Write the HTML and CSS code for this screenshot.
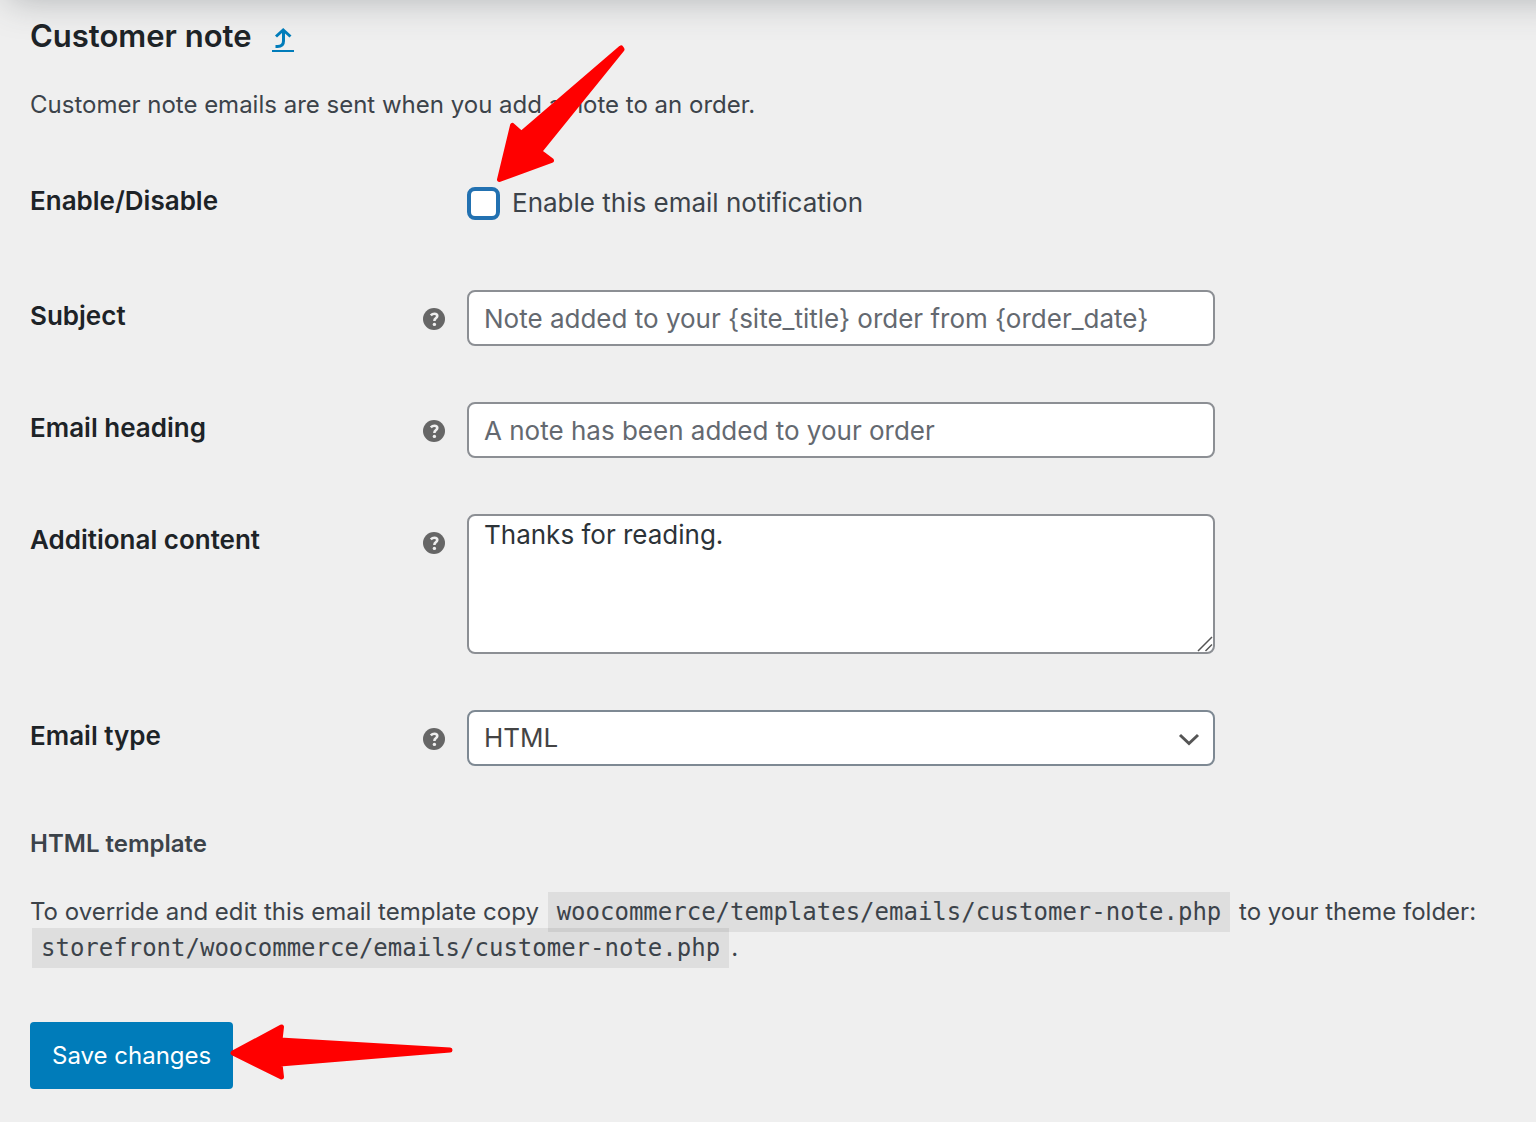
FILE: index.html
```html
<!DOCTYPE html>
<html lang="en">
<head>
    <meta charset="UTF-8">
    <meta name="viewport" content="width=device-width, initial-scale=1.0">
    <link rel="stylesheet" href="styles.css">
    <title>Customer note</title>
</head>
<body>
    <div class="top-bar"></div>
    <main class="settings">
        <h2 class="title">
            Customer note
            <a href="#" class="back-link" aria-label="Return to emails">
                <svg width="22" height="25" viewBox="0 0 22 25" fill="none" stroke="currentColor">
                    <path d="M3.500 19.500H5.500Q11.500 19.500 11.500 14V3.500" stroke-width="3"/>
                    <path d="M4 9.500L11.200 3L18.500 9.500" stroke-width="3"/>
                    <path d="M0 24H22" stroke-width="2"/>
                </svg>
            </a>
        </h2>
        <p class="description">Customer note emails are sent when you add a note to an order.</p>

        <form id="email-form">
            <div class="form-row enable-row">
                <label class="row-label" for="enabled">Enable/Disable</label>
                <div class="check-wrap">
                    <label class="check-label"><input type="checkbox" class="checkbox" id="enabled">Enable this email notification</label>
                    <svg class="arrow arrow-down" width="128" height="138" viewBox="0 0 128 138">
                        <path class="arrow-fill" d="M124 3L24.500 88.500L15.500 80.500L2.500 134.500L54.500 115.500L42.500 106.500L125 4.500Z"/>
                    </svg>
                </div>
            </div>
            <div class="form-row">
                <label class="row-label" for="subject">Subject</label>
                <svg class="help" viewBox="0 0 22 22"><use href="#help-icon"/></svg>
                <input type="text" class="field" id="subject" placeholder="Note added to your {site_title} order from {order_date}">
            </div>
            <div class="form-row">
                <label class="row-label" for="heading">Email heading</label>
                <svg class="help" viewBox="0 0 22 22"><use href="#help-icon"/></svg>
                <input type="text" class="field" id="heading" placeholder="A note has been added to your order">
            </div>
            <div class="form-row">
                <label class="row-label" for="content">Additional content</label>
                <svg class="help" viewBox="0 0 22 22"><use href="#help-icon"/></svg>
                <div class="textarea-wrap">
                    <textarea class="field" id="content">Thanks for reading.</textarea>
                    <svg class="grip" width="16" height="16" viewBox="0 0 16 16">
                        <path d="M1 15L15 1M8.500 15L15 8.500"/>
                    </svg>
                </div>
            </div>
            <div class="form-row">
                <label class="row-label" for="type">Email type</label>
                <svg class="help" viewBox="0 0 22 22"><use href="#help-icon"/></svg>
                <div class="select-wrap">
                    <select class="field" id="type">
                        <option>HTML</option>
                        <option>Plain text</option>
                        <option>Multipart</option>
                    </select>
                    <svg class="chevron" width="22" height="14" viewBox="0 0 22 14">
                        <path d="M2 2L11 10.500L20 2"/>
                    </svg>
                </div>
            </div>
        </form>

        <h4 class="subtitle">HTML template</h4>
        <p class="template-text">To override and edit this email template copy <code>woocommerce/templates/emails/customer-note.php</code> to your theme folder: <code>storefront/woocommerce/emails/customer-note.php</code>.</p>

        <div class="submit">
            <button type="submit" class="save-button" form="email-form">Save changes</button>
            <svg class="arrow arrow-left" width="224" height="60" viewBox="0 0 224 60">
                <path class="arrow-fill" d="M3 31L51.500 5L50 18L220 28L50 42L51.500 55Z"/>
            </svg>
        </div>
    </main>

    <svg class="sprite" aria-hidden="true">
        <symbol id="help-icon" viewBox="0 0 22 22">
            <circle cx="11" cy="11" r="11" fill="#666"/>
            <path d="M7.800 7.400Q9.400 5.700 11.400 5.700Q14.300 5.700 14.300 8Q14.300 9.300 12.700 10.300Q11.400 11.100 11.400 12.900" fill="none" stroke="#efefef" stroke-width="2.600"/>
            <circle cx="11.400" cy="16.400" r="1.700" fill="#efefef"/>
        </symbol>
    </svg>
</body>
</html>
```
FILE: styles.css
```css
* {
    box-sizing: border-box;
}

body {
    display: flow-root;
    font-family: Inter, "Liberation Sans", sans-serif;
    font-size: 24px;
    line-height: 36px;
    color: #3c434a;
    background-color: #efefef;
    margin: 0;
    overflow-x: hidden;
}

/* Sits above the page, only its shadow shows */
.top-bar {
    height: 60px;
    margin: -60px -40px 0 8px;
    box-shadow: 0 0 36px rgba(60, 67, 74, 0.34);
}

.settings {
    padding: 16px 30px 34px;
}

.title {
    display: flex;
    align-items: center;
    gap: 20px;
    margin: 0;
    font-size: 31px;
    line-height: 40px;
    font-weight: 600;
    color: #1d2327;
}

.back-link {
    display: flex;
    padding-top: 6px;
    color: #007cba;
}

.description {
    margin: 31px 0 52px;
}

.form-row {
    display: grid;
    grid-template-columns: 371px 22px minmax(0, 748px);
    column-gap: 22px;
    align-items: start;
    margin-bottom: 56px;
}

.row-label {
    font-size: 26px;
    font-weight: 600;
    line-height: 52px;
    color: #1d2327;
}

.enable-row {
    min-height: 61px;
    margin-bottom: 54px;
}

.check-wrap {
    grid-column: 3;
    position: relative;
}

.check-label {
    display: flex;
    align-items: center;
    gap: 12px;
    font-size: 26px;
    line-height: 56px;
}

.checkbox {
    appearance: none;
    width: 33px;
    height: 33px;
    margin: 0;
    background-color: #fff;
    border: 4px solid #2271b1;
    border-radius: 8px;
}

.help {
    width: 22px;
    height: 22px;
    margin-top: 18px;
}

.field {
    display: block;
    width: 100%;
    height: 56px;
    padding: 0 15px;
    font-family: inherit;
    font-size: 26px;
    line-height: 36px;
    color: #2c3338;
    background-color: #fff;
    border: 2px solid #8c8f94;
    border-radius: 8px;
}

.field::placeholder {
    color: #646970;
    opacity: 1;
}

textarea.field {
    height: 140px;
    padding-top: 1px;
    resize: none;
}

select.field {
    appearance: none;
    color: #444;
    border-color: #7e8993;
}

.textarea-wrap,
.select-wrap {
    position: relative;
}

.grip {
    position: absolute;
    right: 2px;
    bottom: 2px;
    fill: none;
    stroke: #555;
    stroke-width: 1.5;
    pointer-events: none;
}

.chevron {
    position: absolute;
    right: 15px;
    top: 23px;
    fill: none;
    stroke: #555;
    stroke-width: 3;
    pointer-events: none;
}

.subtitle {
    margin: 60px 0 32px;
    font-size: 24px;
    font-weight: 600;
}

.template-text {
    margin: 0 0 56px;
}

code {
    font-family: "DejaVu Sans Mono", monospace;
    font-size: 24px;
    padding: 6px 9px;
    margin: 0 2px;
    background-color: rgba(0, 0, 0, 0.07);
}

.submit {
    display: flex;
    position: relative;
}

.save-button {
    padding: 0 22px;
    font-family: inherit;
    font-size: 24px;
    line-height: 67px;
    color: #fff;
    background-color: #007cba;
    border: none;
    border-radius: 4px;
    cursor: pointer;
}

/* Arrows drawn over the form */
.arrow {
    position: absolute;
    pointer-events: none;
}

.arrow-fill {
    fill: #f00;
    stroke: #f00;
    stroke-width: 5;
    stroke-linejoin: round;
}

.arrow-down {
    left: 30px;
    bottom: 48px;
}

.arrow-left {
    left: 200px;
    top: 0;
}

.sprite {
    display: none;
}
```
